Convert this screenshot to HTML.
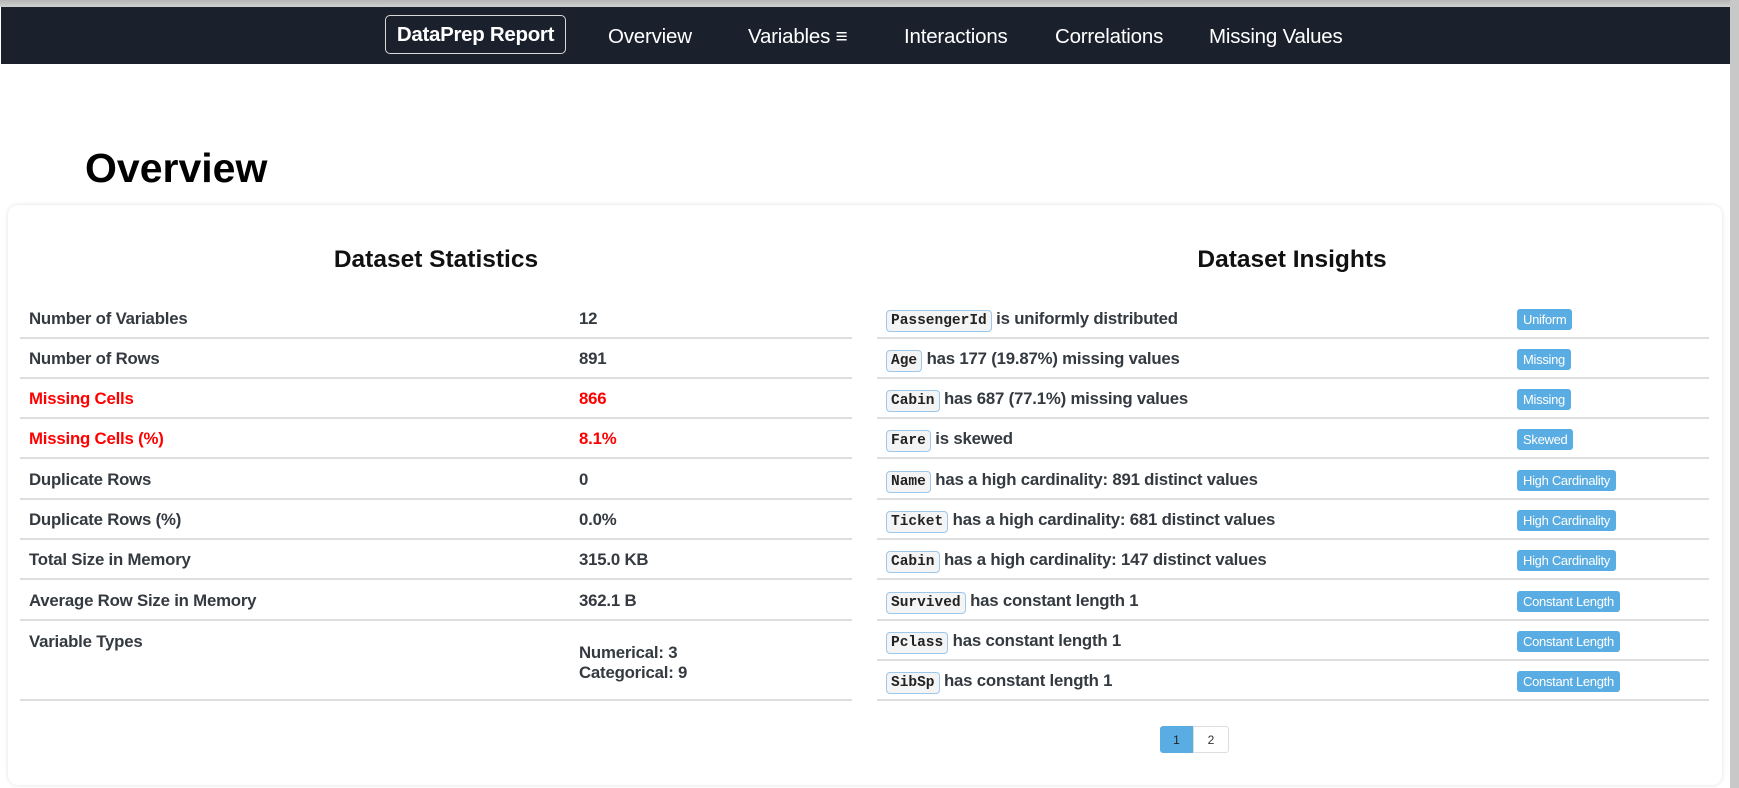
<!DOCTYPE html>
<html><head><meta charset="utf-8"><style>
*{box-sizing:border-box;margin:0;padding:0}
html,body{width:1739px;height:788px;overflow:hidden;background:#fff;font-family:"Liberation Sans",Arial,sans-serif}
.topgray{position:absolute;left:0;top:0;width:1739px;height:7px;background:linear-gradient(#b5b5b5,#d0d0d0)}
.rgray{position:absolute;right:0;top:0;width:9px;height:788px;background:#c8c8c8}
.nav{position:absolute;left:1px;top:7px;width:1729px;height:57px;background:#1b212c}
.brand{position:absolute;left:384px;top:8px;width:181px;height:39px;border:1.5px solid #d8d8d8;border-radius:5px;color:#fff;font-weight:bold;font-size:20.5px;line-height:38px;text-align:center;letter-spacing:-0.3px}
.ni{position:absolute;top:2px;line-height:56px;color:#fff;font-size:20.5px;letter-spacing:-0.2px}
h1{position:absolute;left:85px;top:145px;font-size:41px;font-weight:bold;color:#000}
.card{position:absolute;left:8px;top:205px;width:1714px;height:580px;border-radius:10px;box-shadow:0 0 5px rgba(0,0,0,.12);background:#fff}
.ttl{position:absolute;top:246px;font-size:24.5px;font-weight:bold;color:#111;text-align:center}
.row{position:absolute;height:40.3px;border-bottom:2px solid #dedede;font-size:16.8px;font-weight:bold;color:#343a40;line-height:40px;letter-spacing:-0.2px}
.l{left:20px;width:832px}
.r{left:877px;width:832px}
.row .v{position:absolute;left:559px}
.l span.k{position:absolute;left:9px}
.red{color:#f00}
.r .t{position:absolute;left:9px}
code{font-family:"Liberation Mono",monospace;font-weight:bold;font-size:14.5px;background:#f4f4f4;border:1.5px solid #9cc8ec;border-radius:4px;padding:2px 4px;color:#222;margin-right:0;letter-spacing:0}
.b{position:absolute;left:640px;top:10px;height:21px;line-height:21px;padding:0 6px;background:#5aade2;color:#fff;font-size:13px;font-weight:normal;border-radius:3px;letter-spacing:-0.3px}
.pg{position:absolute;top:726px;height:27px;line-height:27px;font-size:12px;text-align:center;border:1px solid #ddd}
</style></head><body>
<div class="topgray"></div><div class="rgray"></div>
<div class="nav">
<div class="brand">DataPrep Report</div>
<div class="ni" style="left:607px">Overview</div>
<div class="ni" style="left:747px">Variables ≡</div>
<div class="ni" style="left:903px">Interactions</div>
<div class="ni" style="left:1054px">Correlations</div>
<div class="ni" style="left:1208px">Missing Values</div>
</div>
<h1>Overview</h1>
<div class="card"></div>
<div class="ttl" style="left:236px;width:400px">Dataset Statistics</div>
<div class="ttl" style="left:1092px;width:400px">Dataset Insights</div>

<div class="row l" style="top:299px"><span class="k">Number of Variables</span><span class="v">12</span></div>
<div class="row l" style="top:339px"><span class="k">Number of Rows</span><span class="v">891</span></div>
<div class="row l red" style="top:379px"><span class="k">Missing Cells</span><span class="v">866</span></div>
<div class="row l red" style="top:419px"><span class="k">Missing Cells (%)</span><span class="v">8.1%</span></div>
<div class="row l" style="top:460px"><span class="k">Duplicate Rows</span><span class="v">0</span></div>
<div class="row l" style="top:500px"><span class="k">Duplicate Rows (%)</span><span class="v">0.0%</span></div>
<div class="row l" style="top:540px"><span class="k">Total Size in Memory</span><span class="v">315.0 KB</span></div>
<div class="row l" style="top:581px"><span class="k">Average Row Size in Memory</span><span class="v">362.1 B</span></div>
<div class="row l" style="top:621px;height:80px;line-height:20px"><span class="k" style="top:11px">Variable Types</span><span class="v" style="top:22px">Numerical: 3<br>Categorical: 9</span></div>

<div class="row r" style="top:299px"><span class="t"><code>PassengerId</code> is uniformly distributed</span><span class="b">Uniform</span></div>
<div class="row r" style="top:339px"><span class="t"><code>Age</code> has 177 (19.87%) missing values</span><span class="b">Missing</span></div>
<div class="row r" style="top:379px"><span class="t"><code>Cabin</code> has 687 (77.1%) missing values</span><span class="b">Missing</span></div>
<div class="row r" style="top:419px"><span class="t"><code>Fare</code> is skewed</span><span class="b">Skewed</span></div>
<div class="row r" style="top:460px"><span class="t"><code>Name</code> has a high cardinality: 891 distinct values</span><span class="b">High Cardinality</span></div>
<div class="row r" style="top:500px"><span class="t"><code>Ticket</code> has a high cardinality: 681 distinct values</span><span class="b">High Cardinality</span></div>
<div class="row r" style="top:540px"><span class="t"><code>Cabin</code> has a high cardinality: 147 distinct values</span><span class="b">High Cardinality</span></div>
<div class="row r" style="top:581px"><span class="t"><code>Survived</code> has constant length 1</span><span class="b">Constant Length</span></div>
<div class="row r" style="top:621px"><span class="t"><code>Pclass</code> has constant length 1</span><span class="b">Constant Length</span></div>
<div class="row r" style="top:661px"><span class="t"><code>SibSp</code> has constant length 1</span><span class="b">Constant Length</span></div>

<div class="pg" style="left:1160px;width:33px;background:#5aade2;border-color:#5aade2;color:#222;border-radius:3px 0 0 3px">1</div>
<div class="pg" style="left:1193px;width:36px;color:#333;border-radius:0 3px 3px 0">2</div>
</body></html>
